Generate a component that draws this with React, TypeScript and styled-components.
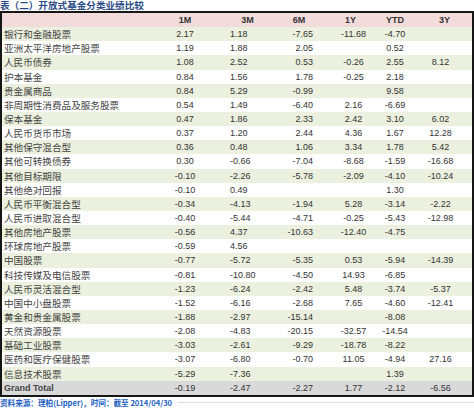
import React from 'react';
import styled, { createGlobalStyle } from 'styled-components';

const GlobalStyle = createGlobalStyle`
  html, body {
    margin: 0;
    padding: 0;
    background: #fff;
  }
  body {
    font-family: 'Liberation Sans', 'Noto Sans CJK SC', sans-serif;
  }
`;

type Align = 'left' | 'center' | 'right';

interface ColSpec {
  title: string;
  align: Align;
  padL?: number;
  padR?: number;
  headPadL?: number;
}

const cols: ColSpec[] = [
  { title: '1M', align: 'center' },
  { title: '3M', align: 'left', padL: 19, headPadL: 14 },
  { title: '6M', align: 'right', padR: 15 },
  { title: '1Y', align: 'center', padL: 6 },
  { title: 'YTD', align: 'center' },
  { title: '3Y', align: 'center', padR: 8 },
];

const rows: [string, ...string[]][] = [
  ['银行和金融股票', '2.17', '1.18', '-7.65', '-11.68', '-4.70', ''],
  ['亚洲太平洋房地产股票', '1.19', '1.88', '2.05', '', '0.52', ''],
  ['人民币债券', '1.08', '2.52', '0.53', '-0.26', '2.55', '8.12'],
  ['护本基金', '0.84', '1.56', '1.78', '-0.25', '2.18', ''],
  ['贵金属商品', '0.84', '5.29', '-0.99', '', '9.58', ''],
  ['非周期性消费品及服务股票', '0.54', '1.49', '-6.40', '2.16', '-6.69', ''],
  ['保本基金', '0.47', '1.86', '2.33', '2.42', '3.10', '6.02'],
  ['人民币货币市场', '0.37', '1.20', '2.44', '4.36', '1.67', '12.28'],
  ['其他保守混合型', '0.36', '0.48', '1.06', '3.34', '1.78', '5.42'],
  ['其他可转换债券', '0.30', '-0.66', '-7.04', '-8.68', '-1.59', '-16.68'],
  ['其他目标期限', '-0.10', '-2.26', '-5.78', '-2.09', '-4.10', '-10.24'],
  ['其他绝对回报', '-0.10', '0.49', '', '', '1.30', ''],
  ['人民币平衡混合型', '-0.34', '-4.13', '-1.94', '5.28', '-3.14', '-2.22'],
  ['人民币进取混合型', '-0.40', '-5.44', '-4.71', '-0.25', '-5.43', '-12.98'],
  ['其他房地产股票', '-0.56', '4.37', '-10.63', '-12.40', '-4.75', ''],
  ['环球房地产股票', '-0.59', '4.56', '', '', '', ''],
  ['中国股票', '-0.77', '-5.72', '-5.35', '0.53', '-5.94', '-14.39'],
  ['科技传媒及电信股票', '-0.81', '-10.80', '-4.50', '14.93', '-6.85', ''],
  ['人民币灵活混合型', '-1.23', '-6.24', '-2.42', '5.48', '-3.74', '-5.37'],
  ['中国中小盘股票', '-1.52', '-6.16', '-2.68', '7.65', '-4.60', '-12.41'],
  ['黄金和贵金属股票', '-1.88', '-2.97', '-15.14', '', '-8.08', ''],
  ['天然资源股票', '-2.08', '-4.83', '-20.15', '-32.57', '-14.54', ''],
  ['基础工业股票', '-3.03', '-2.61', '-9.29', '-18.78', '-8.22', ''],
  ['医药和医疗保健股票', '-3.07', '-6.80', '-0.70', '11.05', '-4.94', '27.16'],
  ['信息技术股票', '-5.29', '-7.36', '', '', '1.39', ''],
];

const total = ['-0.19', '-2.47', '-2.27', '1.77', '-2.12', '-6.56'];

const Page = styled.div`
  width: 474px;
  height: 410px;
  overflow: hidden;
`;

const Title = styled.div`
  height: 11px;
  display: flex;
  align-items: center;
  font-family: 'Noto Sans CJK SC', sans-serif;
  font-size: 9.6px;
  line-height: 11px;
  font-weight: 700;
  color: #2a4a86;
  white-space: nowrap;
`;

const Table = styled.div`
  border: 2px solid #161616;
  width: 474px;
  box-sizing: border-box;
`;

const Row = styled.div<{ $bg: string }>`
  display: grid;
  grid-template-columns: 157px 52px 59px 58px 45px 44px 55px;
  height: 14.15px;
  background: ${({ $bg }) => $bg};
`;

const Label = styled.div<{ $bold?: boolean }>`
  padding-left: 2px;
  display: flex;
  align-items: center;
  font-family: ${({ $bold }) =>
    $bold ? "'Liberation Sans', sans-serif" : "'Noto Sans CJK SC', sans-serif"};
  font-size: ${({ $bold }) => ($bold ? '9px' : '9.6px')};
  font-weight: ${({ $bold }) => ($bold ? 700 : 400)};
  color: #444;
  white-space: nowrap;
  overflow: hidden;
`;

const Cell = styled.div<{ $align: Align; $padL?: number; $padR?: number; $bold?: boolean }>`
  display: flex;
  align-items: center;
  justify-content: ${({ $align }) =>
    $align === 'left' ? 'flex-start' : $align === 'right' ? 'flex-end' : 'center'};
  padding-left: ${({ $padL }) => $padL ?? 0}px;
  padding-right: ${({ $padR }) => $padR ?? 0}px;
  font-family: 'Liberation Sans', sans-serif;
  font-size: 9px;
  font-weight: ${({ $bold }) => ($bold ? 700 : 400)};
  color: #333;
  white-space: nowrap;
`;

const Footer = styled.div`
  display: flex;
  align-items: center;
  height: 11px;
`;

const Source = styled.span`
  font-family: 'Noto Sans CJK SC', sans-serif;
  font-size: 7.6px;
  font-weight: 700;
  line-height: 11px;
  color: #2361c4;
  white-space: nowrap;
`;

const Rule = styled.div`
  flex: 1;
  margin-left: 6px;
  border-top: 1px solid #dedede;
`;

export default function App() {
  return (
    <Page>
      <GlobalStyle />
      <Title>表（二）开放式基金分类业绩比较</Title>
      <Table>
        <Row $bg="#f2dcdb">
          <Label />
          {cols.map((c) => (
            <Cell key={c.title} $align="center" $padL={c.headPadL} $bold>
              {c.title}
            </Cell>
          ))}
        </Row>
        {rows.map(([name, ...vals], i) => (
          <Row key={name} $bg={i % 2 === 0 ? '#ebf1de' : '#ffffff'}>
            <Label>{name}</Label>
            {vals.map((v, j) => (
              <Cell key={j} $align={cols[j].align} $padL={cols[j].padL} $padR={cols[j].padR}>
                {v}
              </Cell>
            ))}
          </Row>
        ))}
        <Row $bg="#d9d9d9">
          <Label $bold>Grand Total</Label>
          {total.map((v, j) => (
            <Cell key={j} $align={cols[j].align} $padL={cols[j].padL} $padR={cols[j].padR}>
              {v}
            </Cell>
          ))}
        </Row>
      </Table>
      <Footer>
        <Source>资料来源：理柏(Lipper)，时间：截至 2014/04/30</Source>
        <Rule />
      </Footer>
    </Page>
  );
}
